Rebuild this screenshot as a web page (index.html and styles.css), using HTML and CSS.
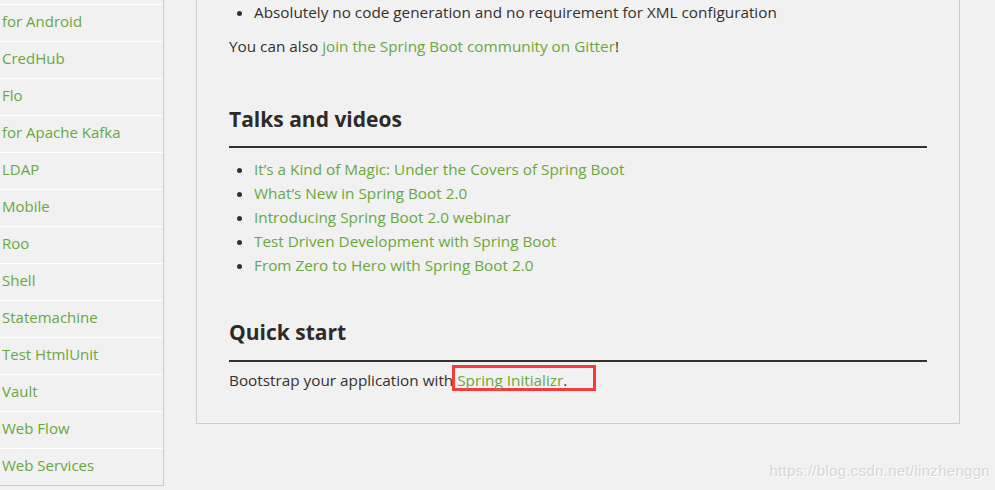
FILE: index.html
```html
<!DOCTYPE html>
<html lang="en">
<head>
    <meta charset="UTF-8">
    <title>Spring Boot</title>
    <link rel="stylesheet" href="styles.css">
</head>
<body>
    <div class="page">
        <aside class="sidebar">
            <ul>
                <li><a href="#">for Android</a></li>
                <li><a href="#">CredHub</a></li>
                <li><a href="#">Flo</a></li>
                <li><a href="#">for Apache Kafka</a></li>
                <li><a href="#">LDAP</a></li>
                <li><a href="#">Mobile</a></li>
                <li><a href="#">Roo</a></li>
                <li><a href="#">Shell</a></li>
                <li><a href="#">Statemachine</a></li>
                <li><a href="#">Test HtmlUnit</a></li>
                <li><a href="#">Vault</a></li>
                <li><a href="#">Web Flow</a></li>
                <li><a href="#">Web Services</a></li>
            </ul>
        </aside>

        <main class="content">
            <ul class="features">
                <li>Absolutely no code generation and no requirement for XML configuration</li>
            </ul>
            <p>You can also <a href="#">join the Spring Boot community on Gitter</a>!</p>

            <h2>Talks and videos</h2>
            <ul class="talks">
                <li><a href="#">It’s a Kind of Magic: Under the Covers of Spring Boot</a></li>
                <li><a href="#">What’s New in Spring Boot 2.0</a></li>
                <li><a href="#">Introducing Spring Boot 2.0 webinar</a></li>
                <li><a href="#">Test Driven Development with Spring Boot</a></li>
                <li><a href="#">From Zero to Hero with Spring Boot 2.0</a></li>
            </ul>

            <h2 class="quick-title">Quick start</h2>
            <p class="quick">Bootstrap your application with <span class="marked"><a href="#">Spring Initializr</a>.</span></p>
        </main>
    </div>

    <div class="watermark">https://blog.csdn.net/linzhenggn</div>
</body>
</html>
```

FILE: styles.css
```css
* {
    margin: 0;
    padding: 0;
    box-sizing: border-box;
}

body {
    background: #f1f1f1;
    color: #34302d;
    font-family: "Open Sans", Arial, sans-serif;
    font-size: 15px;
    overflow: hidden;
}

a {
    color: #6aa83c;
    text-decoration: none;
}

.page {
    display: flex;
    align-items: flex-start;
}

/* left project list */
.sidebar {
    width: 164px;
    flex-shrink: 0;
    padding-top: 4px;
    border-right: 1px solid #cbcbcb;
    border-bottom: 1px solid #cbcbcb;
}

.sidebar ul {
    list-style: none;
}

.sidebar li {
    height: 37px;
    border-top: 1px solid #fff;
    display: flex;
    align-items: center;
    padding: 0 0 5px 2px;
}

/* main panel */
.content {
    width: 764px;
    margin-left: 32px;
    padding: 0 32px 31px;
    border: 1px solid #cbcbcb;
    border-top: none;
    font-size: 15.3px;
}

.content p {
    line-height: 24px;
    margin-bottom: 10px;
}

.content ul {
    padding-left: 25px;
    line-height: 24px;
}

.features {
    margin-bottom: 10px;
}

h2 {
    font-family: "Open Sans", Arial, sans-serif;
    font-weight: 700;
    font-size: 21px;
    color: #2d2a28;
    margin-top: 47px;
    padding-bottom: 13px;
    border-bottom: 2px solid #34302d;
    margin-bottom: 9px;
}

.quick-title {
    margin-top: 41px;
    padding-bottom: 14px;
    margin-bottom: 3px;
}

.content .quick {
    margin-bottom: 0;
}

.marked {
    display: inline-block;
    line-height: 15px;
    padding: 5px 26px 0 2px;
    margin-left: -5px;
    border: 3px solid #f33c3c;
}

.watermark {
    position: absolute;
    right: 5px;
    bottom: 11px;
    font-family: "Liberation Sans", Arial, sans-serif;
    font-size: 15px;
    letter-spacing: 0.3px;
    color: #d6d6d6;
    text-shadow: 1px 1px 0 #fff;
}
```
